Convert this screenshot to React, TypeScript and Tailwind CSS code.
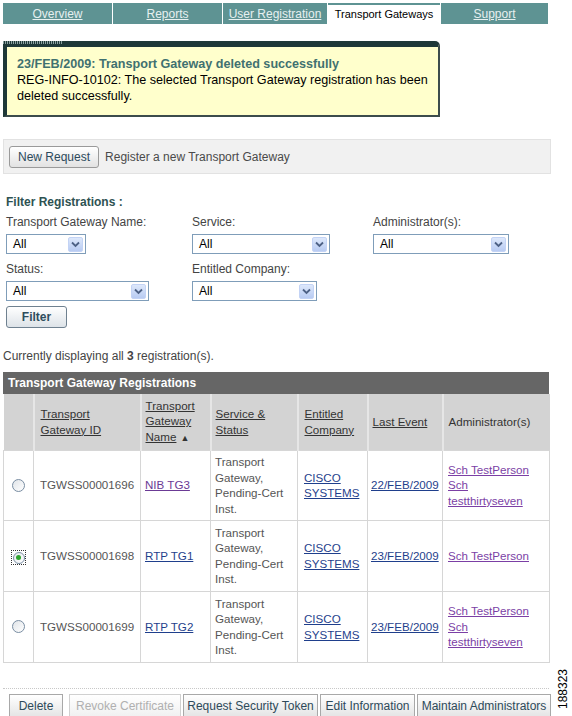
import React from "react";

const TABS = [
  { label: "Overview", w: "w-[109px]" },
  { label: "Reports", w: "w-[109px]" },
  { label: "User Registration", w: "w-[104px]" },
  { label: "Transport Gateways", w: "w-[112px]", active: true },
  { label: "Support", w: "w-[107px]" },
];

const ROWS = [
  { id: "TGWSS00001696", name: "NIB TG3", visited: true, date: "22/FEB/2009", admins: ["Sch TestPerson", "Sch", "testthirtyseven"] },
  { id: "TGWSS00001698", name: "RTP TG1", visited: false, date: "23/FEB/2009", admins: ["Sch TestPerson"], selected: true },
  { id: "TGWSS00001699", name: "RTP TG2", visited: false, date: "23/FEB/2009", admins: ["Sch TestPerson", "Sch", "testthirtyseven"] },
];

function Select({ w }: { w: string }) {
  return (
    <div className={`${w} h-[20px] border border-[#7f9db9] bg-white flex items-center justify-between pl-[6px] pr-[2px]`}>
      <span className="text-[12px] text-black">All</span>
      <span className="w-[15px] h-[15px] rounded-[2px] bg-gradient-to-b from-[#dde8fb] to-[#b8cbf2] border border-[#c3d3f5] flex items-center justify-center">
        <svg width="9" height="7" viewBox="0 0 9 7">
          <path d="M1 1.5 L4.5 5 L8 1.5" fill="none" stroke="#4d6185" strokeWidth="1.8" />
        </svg>
      </span>
    </div>
  );
}

function Radio({ selected }: { selected?: boolean }) {
  if (selected) {
    return (
      <span className="inline-flex items-center justify-center w-[15px] h-[15px] border border-dotted border-[#333]">
        <span className="w-[12px] h-[12px] rounded-full border border-[#7a8ea3] bg-gradient-to-br from-[#e4e8ec] to-white flex items-center justify-center">
          <span className="w-[5px] h-[5px] rounded-full bg-[#2fa52f]" />
        </span>
      </span>
    );
  }
  return <span className="inline-block w-[13px] h-[13px] rounded-full border border-[#7a8ea3] bg-gradient-to-br from-[#e0e4e8] to-white" />;
}

export default function App() {
  return (
    <div className="w-[572px] h-[716px] overflow-hidden bg-white relative text-[12px] text-[#333]" style={{ fontFamily: '"Liberation Sans", Arial, sans-serif' }}>
      {/* Tab bar */}
      <div className="flex gap-px pl-[3px] pt-[3px]">
        {TABS.map((t) =>
          t.active ? (
            <div key={t.label} className={`${t.w} h-[21px] bg-white border-t-2 border-[#5e9393] flex items-center justify-center text-[11px] text-black`}>
              {t.label}
            </div>
          ) : (
            <div key={t.label} className={`${t.w} h-[21px] bg-[#5e9393] flex items-center justify-center`}>
              <span className="underline text-[#e6f0f0]">{t.label}</span>
            </div>
          )
        )}
      </div>

      {/* Success notification */}
      <div className="ml-[3px] mt-[17px] w-[437px] h-[76px] bg-[#ffffcc] border-t-[6px] border-l-[4px] border-r-2 border-b-2 border-[#1e3838] border-r-[#3c4c4c] border-b-[#3c4c4c] rounded-tr-[5px] pl-[10px] pt-[9px] leading-[16px] text-[12.6px] relative">
        <div className="absolute -top-[6px] -left-[4px] w-[60px] h-[3px] bg-[repeating-linear-gradient(90deg,#8aa0a0_0px,#8aa0a0_1px,#1e3838_1px,#1e3838_2px)]" />
        <div className="font-bold text-[#3f7170]">23/FEB/2009: Transport Gateway deleted successfully</div>
        <div className="text-black">REG-INFO-10102: The selected Transport Gateway registration has been</div>
        <div className="text-black">deleted successfully.</div>
      </div>

      {/* New request bar */}
      <div className="ml-[3px] mt-[22px] w-[548px] h-[35px] bg-[#f1f1f1] border border-[#e2e2e2] flex items-center pl-[5px] gap-[6px]">
        <button className="h-[22px] px-[8px] rounded-[3px] border border-[#9a9a9a] bg-gradient-to-b from-white to-[#e2e2e2] text-[12px] text-[#2d4a5c]">
          New Request
        </button>
        <span className="text-[#4a4a4a]">Register a new Transport Gateway</span>
      </div>

      {/* Filters */}
      <div className="pl-[6px] mt-[20px]">
        <div className="font-bold text-[#2e5252] leading-[16px]">Filter Registrations :</div>
        <div className="flex mt-[5px] leading-[14px] text-[#444]">
          <div className="w-[186px]">
            <div>Transport Gateway Name:</div>
            <div className="mt-[5px]"><Select w="w-[80px]" /></div>
          </div>
          <div className="w-[181px]">
            <div>Service:</div>
            <div className="mt-[5px]"><Select w="w-[138px]" /></div>
          </div>
          <div>
            <div>Administrator(s):</div>
            <div className="mt-[5px]"><Select w="w-[136px]" /></div>
          </div>
        </div>
        <div className="flex mt-[8px] leading-[14px] text-[#444]">
          <div className="w-[186px]">
            <div>Status:</div>
            <div className="mt-[5px]"><Select w="w-[143px]" /></div>
          </div>
          <div>
            <div>Entitled Company:</div>
            <div className="mt-[5px]"><Select w="w-[125px]" /></div>
          </div>
        </div>
        <button className="mt-[5px] w-[61px] h-[22px] rounded-[3px] border border-[#6f8190] bg-gradient-to-b from-white to-[#dde3e8] font-bold text-[#2e4d5e] text-[12px]">
          Filter
        </button>
      </div>

      <div className="pl-[3px] mt-[21px] text-[#444] leading-[14px]">
        Currently displaying all <span className="font-bold">3</span> registration(s).
      </div>

      {/* Registrations table */}
      <div className="ml-[3px] mt-[9px] w-[546px]">
        <div className="h-[22px] bg-[#666666] text-white font-bold flex items-center pl-[5px]">
          Transport Gateway Registrations
        </div>
        <table className="w-[546px] border-collapse table-fixed leading-[15.5px] text-[11.6px]">
          <colgroup>
            <col className="w-[30px]" />
            <col className="w-[107px]" />
            <col className="w-[70px]" />
            <col className="w-[87px]" />
            <col className="w-[70px]" />
            <col className="w-[75px]" />
            <col className="w-[107px]" />
          </colgroup>
          <thead>
            <tr className="h-[56px] bg-[#d3d3d3] text-[#333] text-left">
              <th className="font-normal border-r-2 border-[#e6e6e6]" />
              <th className="font-normal border-r-2 border-[#e6e6e6] px-[6px]">
                <span className="underline">Transport Gateway ID</span>
              </th>
              <th className="font-normal border-r-2 border-[#e6e6e6] px-[4px]">
                <div className="underline">Transport</div>
                <div className="underline">Gateway</div>
                <div>
                  <span className="underline">Name</span>
                  <span className="ml-[4px] text-[9px]">▲</span>
                </div>
              </th>
              <th className="font-normal border-r-2 border-[#e6e6e6] px-[4px]">
                <span className="underline">Service &amp; Status</span>
              </th>
              <th className="font-normal border-r-2 border-[#e6e6e6] px-[6px]">
                <span className="underline">Entitled Company</span>
              </th>
              <th className="font-normal border-r-2 border-[#e6e6e6] px-[4px]">
                <span className="underline">Last Event</span>
              </th>
              <th className="font-normal px-[5px]">Administrator(s)</th>
            </tr>
          </thead>
          <tbody>
            {ROWS.map((r, i) => (
              <tr key={r.id} className={i === 0 ? "h-[70px]" : "h-[71px]"}>
                <td className="border border-[#d6d6d6] text-center align-middle">
                  <span className="inline-flex pt-[4px]"><Radio selected={r.selected} /></span>
                </td>
                <td className="border border-[#d6d6d6] px-[6px] text-[#555]">{r.id}</td>
                <td className="border border-[#d6d6d6] px-[4px]">
                  <span className={`underline ${r.visited ? "text-[#6b3a95]" : "text-[#1f3f8c]"}`}>{r.name}</span>
                </td>
                <td className="border border-[#d6d6d6] px-[4px] text-[#555]">
                  Transport Gateway, Pending-Cert Inst.
                </td>
                <td className="border border-[#d6d6d6] px-[6px]">
                  <span className="underline text-[#1f3f8c]">CISCO SYSTEMS</span>
                </td>
                <td className="border border-[#d6d6d6] px-[3px]">
                  <span className="underline text-[#1f3f8c]">{r.date}</span>
                </td>
                <td className="border border-[#d6d6d6] px-[5px]">
                  {r.admins.map((a) => (
                    <div key={a} className="underline text-[#7b3fa5]">{a}</div>
                  ))}
                </td>
              </tr>
            ))}
          </tbody>
        </table>
      </div>

      {/* Action buttons */}
      <div className="ml-[3px] mt-[25px] w-[546px] border-t border-dotted border-[#c8c8c8]" />
      <div className="flex items-start mt-[5px] pl-[9px]">
        <button className="h-[24px] w-[54px] border border-[#a8a8a8] bg-gradient-to-b from-white to-[#e4e4e4] text-[#2e4a5a] text-[12px]">Delete</button>
        <button className="ml-[6px] h-[24px] w-[112px] border border-[#d0d0d0] bg-gradient-to-b from-white to-[#f0f0f0] text-[#b0b0b0] text-[12px]">Revoke Certificate</button>
        <button className="ml-[2px] h-[24px] w-[135px] border border-[#a8a8a8] bg-gradient-to-b from-white to-[#e4e4e4] text-[#2e4a5a] text-[12px]">Request Security Token</button>
        <button className="ml-[2px] h-[24px] w-[95px] border border-[#a8a8a8] bg-gradient-to-b from-white to-[#e4e4e4] text-[#2e4a5a] text-[12px]">Edit Information</button>
        <button className="ml-[2px] h-[24px] w-[134px] border border-[#a8a8a8] bg-gradient-to-b from-white to-[#e4e4e4] text-[#2e4a5a] text-[12px]">Maintain Administrators</button>
      </div>

      {/* Figure number */}
      <div className="absolute right-[2px] bottom-[4px] w-[14px] h-[46px] flex items-center justify-center">
        <span className="block -rotate-90 text-[12px] text-black whitespace-nowrap">188323</span>
      </div>
    </div>
  );
}
